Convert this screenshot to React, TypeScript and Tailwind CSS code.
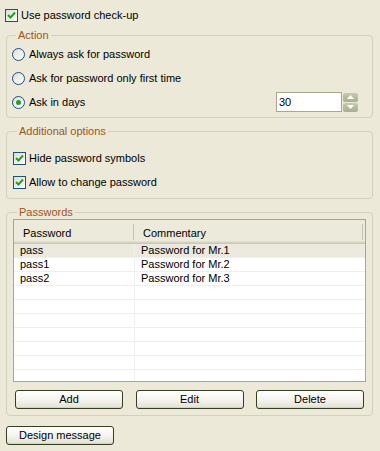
import React from 'react';

const rows = [
  { name: 'pass', comment: 'Password for Mr.1' },
  { name: 'pass1', comment: 'Password for Mr.2' },
  { name: 'pass2', comment: 'Password for Mr.3' },
  { name: '', comment: '' },
  { name: '', comment: '' },
  { name: '', comment: '' },
  { name: '', comment: '' },
  { name: '', comment: '' },
  { name: '', comment: '' },
  { name: '', comment: '' },
];

function Checkbox({ label }: { label: string }) {
  return (
    <label className="flex items-center gap-[3px] h-[20px]">
      <span className="w-[13px] h-[13px] border border-[#1C5180] bg-gradient-to-br from-[#DCDCD7] to-white flex items-center justify-center shrink-0">
        <svg width="9" height="9" viewBox="0 0 9 9">
          <path d="M1 4 L3.5 6.5 L8 1.5" fill="none" stroke="#21A121" strokeWidth="2" />
        </svg>
      </span>
      <span>{label}</span>
    </label>
  );
}

function Radio({ label, checked }: { label: string; checked?: boolean }) {
  return (
    <label className="flex items-center gap-[4px] h-[20px]">
      <span className="w-[13px] h-[13px] rounded-full border border-[#1C5180] bg-gradient-to-br from-[#DCDCD7] to-white flex items-center justify-center shrink-0">
        {checked && <span className="w-[5px] h-[5px] rounded-full bg-[#21A121]" />}
      </span>
      <span>{label}</span>
    </label>
  );
}

function Button({ label, className }: { label: string; className: string }) {
  return (
    <button
      type="button"
      className={`h-[19px] border border-[#343F22] rounded-[3px] bg-gradient-to-b from-white via-[#F5F4EE] to-[#E3E1D6] shadow-[inset_0_-1px_0_#D6D0C5] text-black ${className}`}
    >
      {label}
    </button>
  );
}

export default function App() {
  return (
    <div className="w-[380px] h-[451px] bg-[#ECE9D8] font-['Liberation_Sans',Arial,sans-serif] text-[11px] leading-[13px] text-black overflow-hidden">
      <div className="pt-[5px] pl-[5px]">
        <Checkbox label="Use password check-up" />
      </div>

      {/* Action */}
      <fieldset className="ml-[6px] w-[367px] mt-[4px] border border-[#D0D0BF] rounded-[4px] h-[89px] pl-[5px] pr-[14px] pt-[2px] pb-[5px]">
        <legend className="ml-[4px] px-[2px] text-[#9E5522]">Action</legend>
        <div className="flex flex-col gap-[4px]">
          <Radio label="Always ask for password" />
          <Radio label="Ask for password only first time" />
          <div className="flex items-center h-[20px]">
            <Radio label="Ask in days" checked />
            <div className="ml-auto flex items-center gap-[1px]">
              <div className="w-[66px] h-[20px] border border-[#A4A98B] bg-white pl-[2px] flex items-center">30</div>
              <div className="flex flex-col h-[19px] gap-[1px]">
                <div className="w-[15px] h-[9px] rounded-[2px] bg-gradient-to-b from-[#C6CBAE] to-[#A9AE8D] flex items-center justify-center">
                  <svg width="7" height="4" viewBox="0 0 7 4"><path d="M0 4 L3.5 0 L7 4 Z" fill="white" /></svg>
                </div>
                <div className="w-[15px] h-[9px] rounded-[2px] bg-gradient-to-b from-[#C6CBAE] to-[#A9AE8D] flex items-center justify-center">
                  <svg width="7" height="4" viewBox="0 0 7 4"><path d="M0 0 L3.5 4 L7 0 Z" fill="white" /></svg>
                </div>
              </div>
            </div>
          </div>
        </div>
      </fieldset>

      {/* Additional options */}
      <fieldset className="ml-[6px] w-[367px] mt-[7px] border border-[#D0D0BF] rounded-[4px] h-[74px] pl-[6px] pt-[10px] pb-[5px]">
        <legend className="ml-[4px] px-[2px] text-[#9E5522]">Additional options</legend>
        <div className="flex flex-col gap-[4px]">
          <Checkbox label="Hide password symbols" />
          <Checkbox label="Allow to change password" />
        </div>
      </fieldset>

      {/* Passwords */}
      <fieldset className="ml-[6px] w-[367px] mt-[7px] border border-[#D0D0BF] rounded-[4px] h-[210px] px-[6px] pb-[6px]">
        <legend className="ml-[4px] px-[2px] text-[#9E5522]">Passwords</legend>
        <div className="h-[163px] border border-[#A4A98B] bg-white overflow-hidden">
          <div className="flex h-[24px] bg-[#EBEADB] shadow-[inset_0_-1px_0_#CBC7B8,inset_0_-2px_0_#D6D2C2,inset_0_-3px_0_#E2DECD]">
            <div className="w-[120px] pl-[9px] mt-[4px] flex items-center h-[16px] pt-[3px] border-r border-[#C7C5B2]">
              Password
            </div>
            <div className="w-[229px] pl-[9px] mt-[4px] flex items-center h-[16px] pt-[3px] border-r border-[#C7C5B2]">
              Commentary
            </div>
          </div>
          {rows.map((r, i) => (
            <div
              key={i}
              className={`flex h-[14px] border-b border-[#EFEFEF] ${i === 0 ? 'bg-[#ECEADF]' : ''}`}
            >
              <div className="w-[121px] pl-[6px] border-r border-[#EFEFEF] flex items-center">{r.name}</div>
              <div className="flex-1 pl-[6px] flex items-center">{r.comment}</div>
            </div>
          ))}
        </div>
        <div className="flex justify-between mt-[8px] px-[2px]">
          <Button label="Add" className="w-[108px]" />
          <Button label="Edit" className="w-[108px]" />
          <Button label="Delete" className="w-[108px]" />
        </div>
      </fieldset>

      <div className="pl-[6px] mt-[10px]">
        <Button label="Design message" className="w-[108px]" />
      </div>
    </div>
  );
}
